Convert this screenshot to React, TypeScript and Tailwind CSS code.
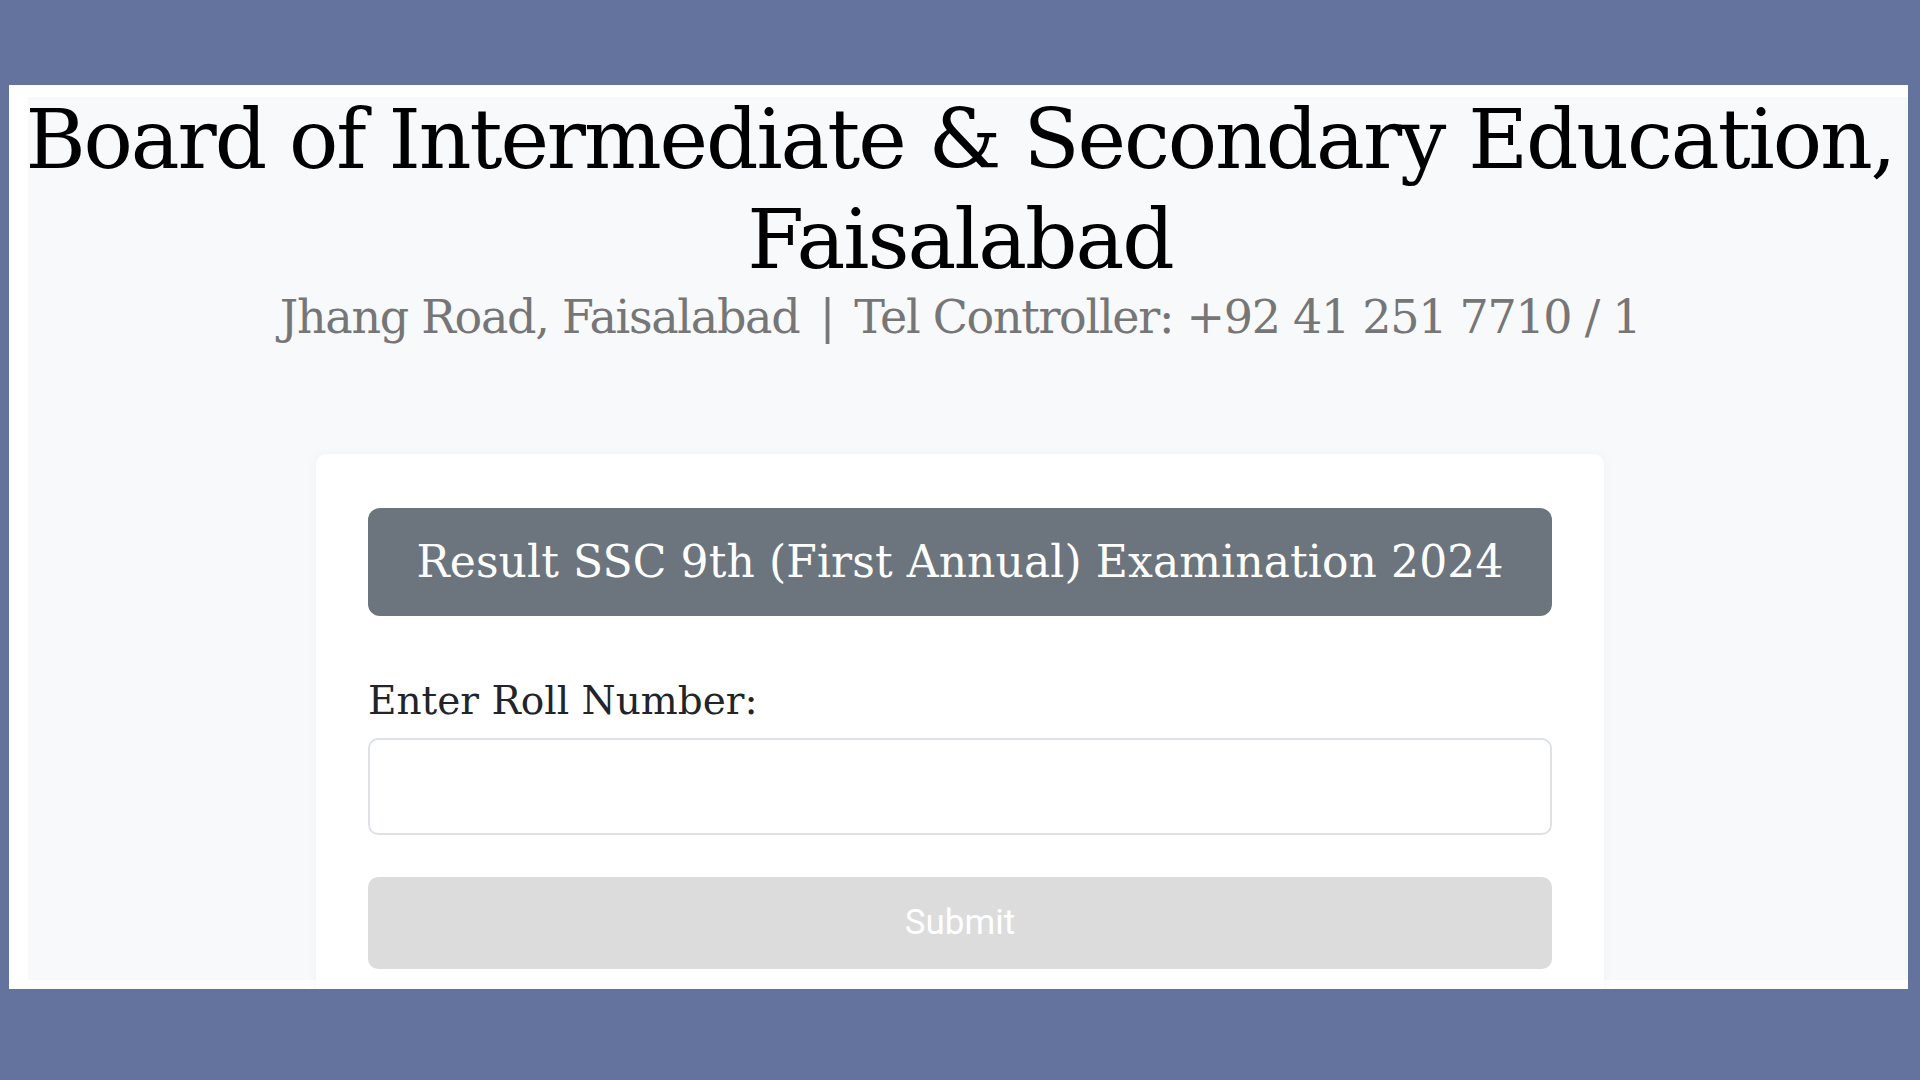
import React from "react";

export default function App() {
  return (
    <div className="w-full h-[1080px] bg-[#63739d] pt-[85px] pl-[9px] pr-[12px] overflow-hidden">
      <div
        className="h-[904px] bg-[#f8f9fa] shadow-[inset_19px_12px_0_0_#ffffff,inset_0_-9px_0_0_#ffffff] overflow-hidden flex flex-col items-center pl-[3px] pt-[5px]"
        style={{ fontFamily: '"DejaVu Serif", "Liberation Serif", serif' }}
      >
        <h1 className="text-[82px] leading-[1.22] tracking-[-2.1px] text-black text-center font-normal whitespace-nowrap">
          Board of Intermediate &amp; Secondary Education,
          <br />
          Faisalabad
        </h1>
        <p className="text-[46px] leading-[1.2] tracking-[-1.3px] text-[#767676] text-center whitespace-nowrap">
          Jhang Road, Faisalabad <span className="mx-[7px]">|</span> Tel Controller: +92 41 251 7710 / 1
        </p>

        <div className="mt-[109px] w-[1288px] bg-white rounded-[10px] shadow-[0_0_12px_rgba(0,0,0,0.04)] pt-[54px] px-[52px] pb-[40px]">
          <div className="h-[108px] bg-[#6c757d] rounded-[12px] flex items-center justify-center">
            <span className="text-[44px] tracking-[0.1px] text-white whitespace-nowrap">
              Result SSC 9th (First Annual) Examination 2024
            </span>
          </div>

          <label className="block mt-[56px] text-[39px] leading-[1.5] text-[#212529]">
            Enter Roll Number:
          </label>
          <input
            type="text"
            className="mt-[7px] block w-full h-[97px] border-2 border-[#dee2e6] rounded-[10px] bg-white outline-none"
          />
          <button
            type="button"
            className="mt-[42px] w-full h-[92px] bg-[#dcdcdc] rounded-[10px] text-white text-[35px]"
            style={{ fontFamily: 'Roboto, "Liberation Sans", sans-serif' }}
          >
            Submit
          </button>
        </div>
      </div>
    </div>
  );
}
